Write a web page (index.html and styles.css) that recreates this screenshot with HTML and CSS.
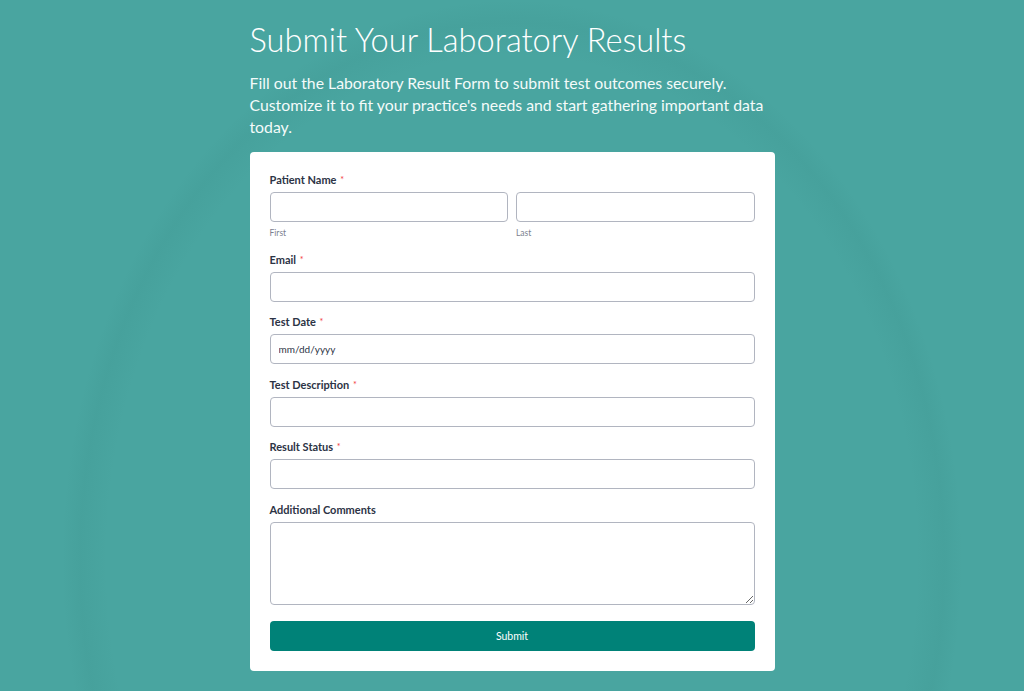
FILE: index.html
```html
<!DOCTYPE html>
<html lang="en">
<head>
<meta charset="utf-8">
<title>Submit Your Laboratory Results</title>
<link rel="stylesheet" href="styles.css">
</head>
<body>
<main class="page">
  <header class="intro">
    <h1 class="title">Submit Your Laboratory Results</h1>
    <p class="lead">Fill out the Laboratory Result Form to submit test outcomes securely. Customize it to fit your practice's needs and start gathering important data today.</p>
  </header>
  <form class="card">
    <div class="field">
      <label class="label">Patient Name <span class="req">*</span></label>
      <div class="name-row">
        <div class="name-col">
          <input class="input" type="text">
          <span class="sublabel">First</span>
        </div>
        <div class="name-col">
          <input class="input" type="text">
          <span class="sublabel">Last</span>
        </div>
      </div>
    </div>
    <div class="field">
      <label class="label">Email <span class="req">*</span></label>
      <input class="input" type="email">
    </div>
    <div class="field">
      <label class="label">Test Date <span class="req">*</span></label>
      <input class="input date" type="text" placeholder="mm/dd/yyyy">
    </div>
    <div class="field">
      <label class="label">Test Description <span class="req">*</span></label>
      <input class="input" type="text">
    </div>
    <div class="field">
      <label class="label">Result Status <span class="req">*</span></label>
      <input class="input" type="text">
    </div>
    <div class="field">
      <label class="label">Additional Comments</label>
      <textarea class="input textarea"></textarea>
    </div>
    <button class="submit" type="button">Submit</button>
  </form>
</main>
</body>
</html>
```
FILE: styles.css
```css
* { box-sizing: border-box; }
html, body { height: 100%; }
body {
  margin: 0;
  font-family: Lato, "Noto Sans", sans-serif;
  background-color: #49a5a0;
  background-image:
    radial-gradient(ellipse 450px 560px at 512px 560px, rgba(0,0,0,0) 0, rgba(0,0,0,0) 90%, rgba(30,100,95,0.06) 96%, rgba(0,0,0,0) 100%);
  overflow: hidden;
}
.page {
  width: 525px;
  margin: 0 auto;
  padding-top: 21px;
}
.title {
  margin: 0;
  font-size: 32.6px;
  font-weight: 300;
  line-height: 38px;
  color: #ffffff;
}
.lead {
  margin: 13px 0 0;
  font-size: 15.8px;
  line-height: 22px;
  color: #f4fbfa;
}
.card {
  margin-top: 14px;
  background: #ffffff;
  border-radius: 4px;
  padding: 20px;
  display: flex;
  flex-direction: column;
}
.field {
  display: flex;
  flex-direction: column;
  margin-bottom: 12.6px;
}
.label {
  font-size: 11px;
  font-weight: 700;
  line-height: 16px;
  color: #2c3345;
  margin-bottom: 4px;
}
.req {
  color: #f23a3c;
  font-weight: 400;
  font-size: 9px;
  margin-left: 1px;
  vertical-align: 1px;
}
.name-row {
  display: flex;
  gap: 8px;
}
.name-col {
  flex: 1;
  display: flex;
  flex-direction: column;
}
.sublabel {
  margin-top: 5px;
  font-size: 8.5px;
  line-height: 12px;
  color: #7b8190;
}
.input {
  display: block;
  width: 100%;
  height: 30px;
  margin: 0;
  border: 1px solid #b1b5c0;
  border-radius: 4px;
  background: #ffffff;
  font-family: Lato, "Noto Sans", sans-serif;
  font-size: 10px;
  color: #2c3345;
  padding: 0 8px;
  outline: none;
}
.date::placeholder {
  color: #2c3345;
  opacity: 1;
}
.textarea {
  height: 83px;
  resize: vertical;
  padding: 8px;
}
.submit {
  margin-top: 3.4px;
  height: 30px;
  border: 0;
  border-radius: 4px;
  background: #008278;
  color: #ffffff;
  font-family: Lato, "Noto Sans", sans-serif;
  font-size: 10.5px;
  font-weight: 400;
  cursor: pointer;
}
```
